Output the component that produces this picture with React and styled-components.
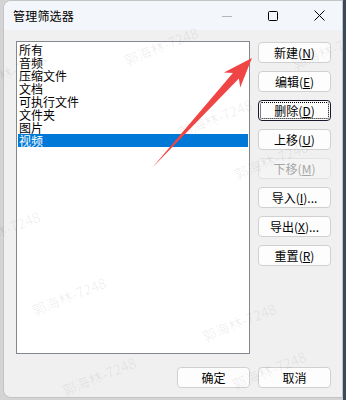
import React from "react";
import styled, { createGlobalStyle } from "styled-components";

const Global = createGlobalStyle`
  html, body {
    margin: 0;
    padding: 0;
    background: #d6d6d6;
    font-family: "Noto Sans CJK SC", "Noto Sans", sans-serif;
  }
`;

const Page = styled.div`
  position: relative;
  width: 346px;
  height: 400px;
  overflow: hidden;
  display: flex;
  padding-left: 3px;
  box-sizing: border-box;
  background: linear-gradient(to right, #d4d4d4 0, #d4d4d4 343px, #3a4a5c 343px);
`;

const Window = styled.div`
  width: 340px;
  height: 398px;
  box-sizing: border-box;
  border: 1px solid #c4c4c4;
  border-radius: 8px 0 0 8px;
  background: #f0f0f0;
  display: flex;
  flex-direction: column;
  overflow: hidden;
`;

const TitleBar = styled.div`
  height: 29px;
  flex: none;
  background: #f3f6fa;
  display: flex;
  align-items: center;
  padding-left: 9px;
  font-size: 12px;
  color: #000;
`;

const TitleText = styled.span`
  flex: 1;
  letter-spacing: 0.2px;
`;

const Controls = styled.div`
  display: flex;
  height: 100%;
`;

const Ctrl = styled.div`
  width: 46px;
  height: 100%;
  display: flex;
  align-items: center;
  justify-content: center;
`;

const Body = styled.div`
  flex: 1;
  display: flex;
  flex-direction: column;
  padding: 11px 11px 0 12px;
`;

const Main = styled.div`
  display: flex;
  gap: 8px;
  height: 313px;
`;

const List = styled.div`
  width: 234px;
  box-sizing: border-box;
  border: 1px solid #828790;
  background: #fff;
  padding: 1px 1px;
  font-size: 12px;
  line-height: 13px;
`;

const Item = styled.div`
  padding-left: 1px;
  height: 13px;
  color: ${(p) => (p.$selected ? "#fff" : "#000")};
  background: ${(p) => (p.$selected ? "#0078d7" : "transparent")};
  white-space: nowrap;
`;

const Side = styled.div`
  display: flex;
  flex-direction: column;
  gap: 8px;
  padding-top: 1px;
`;

const Button = styled.div`
  width: 73px;
  height: 21px;
  box-sizing: border-box;
  border: 1px solid ${(p) => (p.$focus ? "#1a1a2e" : p.$disabled ? "#e2e2e2" : "#d0d0d0")};
  border-radius: 4px;
  background: ${(p) => (p.$disabled ? "#f4f4f4" : "#fdfdfd")};
  color: ${(p) => (p.$disabled ? "#a6a6a6" : "#000")};
  font-size: 12px;
  display: flex;
  align-items: center;
  justify-content: center;
  position: relative;
  &::after {
    content: "";
    display: ${(p) => (p.$focus ? "block" : "none")};
    position: absolute;
    inset: 1px;
    border: 1px dotted #000;
    border-radius: 2px;
  }
`;

const Key = styled.span`
  text-decoration: underline;
  text-underline-offset: 1px;
`;

const Footer = styled.div`
  display: flex;
  justify-content: flex-end;
  gap: 8px;
  margin-top: 13px;
`;

const Watermark = styled.div`
  position: absolute;
  font-size: 14px;
  color: rgba(0, 0, 0, 0.07);
  transform: rotate(-22deg);
  white-space: nowrap;
  pointer-events: none;
  font-family: "Noto Sans CJK SC", sans-serif;
`;

const Arrow = styled.svg`
  position: absolute;
  left: 0;
  top: 0;
  pointer-events: none;
`;

const items = ["所有", "音频", "压缩文件", "文档", "可执行文件", "文件夹", "图片", "视频"];

const buttons = [
  { label: "新建", key: "N" },
  { label: "编辑", key: "E" },
  { label: "删除", key: "D", focus: true },
  { label: "上移", key: "U" },
  { label: "下移", key: "M", disabled: true },
  { label: "导入", key: "I", tail: "..." },
  { label: "导出", key: "X", tail: "..." },
  { label: "重置", key: "R" },
];

const marks = [
  [122, 36], [-30, 62], [176, 108], [290, 40], [232, 150], [-36, 220],
  [30, 286], [200, 312], [60, 366], [230, 360],
];

export default function App() {
  return (
    <Page>
      <Global />
      <Window>
        <TitleBar>
          <TitleText>管理筛选器</TitleText>
          <Controls>
            <Ctrl>
              <svg width="10" height="10" viewBox="0 0 10 10">
                <line x1="0" y1="5.5" x2="10" y2="5.5" stroke="#b5b5b5" strokeWidth="1" />
              </svg>
            </Ctrl>
            <Ctrl>
              <svg width="10" height="10" viewBox="0 0 10 10">
                <rect x="0.5" y="0.5" width="9" height="9" rx="1" fill="none" stroke="#000" strokeWidth="1" />
              </svg>
            </Ctrl>
            <Ctrl>
              <svg width="11" height="11" viewBox="0 0 11 11">
                <path d="M0.5 0.5 L10.5 10.5 M10.5 0.5 L0.5 10.5" stroke="#000" strokeWidth="1" />
              </svg>
            </Ctrl>
          </Controls>
        </TitleBar>
        <Body>
          <Main>
            <List>
              {items.map((t, i) => (
                <Item key={t} $selected={i === items.length - 1}>{t}</Item>
              ))}
            </List>
            <Side>
              {buttons.map((b) => (
                <Button key={b.label} $focus={b.focus} $disabled={b.disabled}>
                  {b.label}(<Key>{b.key}</Key>){b.tail}
                </Button>
              ))}
            </Side>
          </Main>
          <Footer>
            <Button>确定</Button>
            <Button>取消</Button>
          </Footer>
        </Body>
      </Window>
      {marks.map(([x, y], i) => (
        <Watermark key={i} style={{ left: x, top: y }}>郭海林-7248</Watermark>
      ))}
      <Arrow width="346" height="400" viewBox="0 0 346 400">
        <polygon
          points="152,168 238.9,78.5 240.2,87.4 252,58 223.9,72.5 232.9,73.1"
          fill="#f04545"
        />
      </Arrow>
    </Page>
  );
}
